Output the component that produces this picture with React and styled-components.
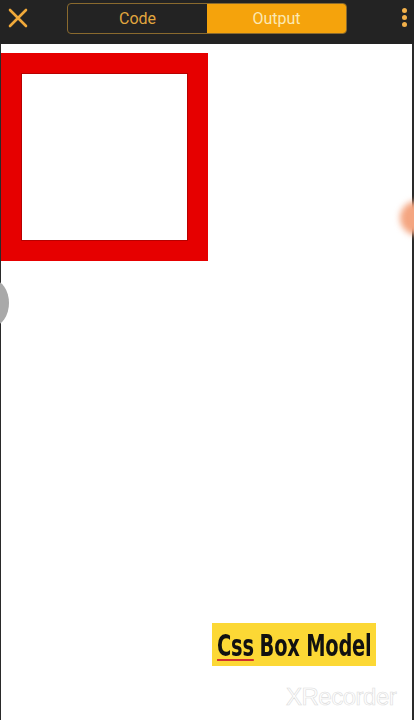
import React from "react";
import styled, { createGlobalStyle } from "styled-components";

const GlobalStyle = createGlobalStyle`
    html, body {
        margin: 0;
        padding: 0;
        background: #ffffff;
        font-family: Roboto, "Liberation Sans", sans-serif;
    }
`;

const Screen = styled.div`
    width: 414px;
    height: 720px;
    display: flex;
    flex-direction: column;
    overflow: hidden;
    position: relative;
    background: #ffffff;
`;

const TopBar = styled.div`
    height: 44px;
    background: #232323;
    display: flex;
    align-items: flex-start;
    padding: 3px 0 0 0;
    box-sizing: border-box;
`;

const CloseButton = styled.div`
    width: 34px;
    height: 30px;
    display: flex;
    align-items: center;
    justify-content: center;
    margin-left: 1px;
`;

const Tabs = styled.div`
    display: flex;
    width: 280px;
    height: 31px;
    margin-left: 32px;
    border: 1px solid #8a6a2e;
    border-radius: 4px;
    overflow: hidden;
    box-sizing: border-box;
`;

const Tab = styled.div`
    flex: 1;
    display: flex;
    align-items: center;
    justify-content: center;
    font-size: 16px;
    color: ${(p) => (p.active ? "#fbe9b4" : "#e1a63e")};
    background: ${(p) => (p.active ? "#f5a30c" : "transparent")};
`;

const Menu = styled.div`
    margin-left: auto;
    margin-right: 7px;
    margin-top: 5px;
    display: flex;
    flex-direction: column;
    gap: 2px;
`;

const Dot = styled.span`
    width: 5px;
    height: 5px;
    border-radius: 50%;
    background: #f2b04a;
`;

const Output = styled.div`
    flex: 1;
    border-left: 1px solid #2a2a2a;
    border-right: 2px solid #2a2a2a;
    padding-top: 9px;
    position: relative;
`;

const Box = styled.div`
    width: 167px;
    height: 168px;
    border: 20px solid #e60000;
    background: #ffffff;
    box-shadow: inset 0 0 0 1px #b80000;
`;

const SideHandle = styled.div`
    position: absolute;
    left: -24px;
    top: 236px;
    width: 32px;
    height: 46px;
    border-radius: 50%;
    background: #a9a9a9;
`;

const OrangeHandle = styled.div`
    position: absolute;
    right: -22px;
    top: 157px;
    width: 34px;
    height: 34px;
    border-radius: 50%;
    background: #f4a580;
    filter: blur(3px);
`;

const Caption = styled.div`
    position: absolute;
    left: 211px;
    top: 579px;
    width: 164px;
    height: 43px;
    background: #fcd835;
    display: flex;
    align-items: center;
    justify-content: center;
    overflow: hidden;
`;

const CaptionText = styled.span`
    display: inline-block;
    white-space: nowrap;
    font-family: "DejaVu Sans Condensed", "DejaVu Sans", sans-serif;
    font-stretch: condensed;
    font-weight: bold;
    font-size: 30px;
    line-height: 1;
    letter-spacing: -0.3px;
    color: #111111;
    transform: scaleX(0.72);
    margin-top: 2px;
`;

const Underlined = styled.span`
    text-decoration: underline;
    text-decoration-color: #d0312d;
    text-decoration-thickness: 2px;
    text-underline-offset: 3px;
    margin-right: 8px;
`;

const Watermark = styled.div`
    position: absolute;
    left: 285px;
    bottom: 9px;
    font-family: "Liberation Sans", sans-serif;
    font-size: 24px;
    color: rgba(255, 255, 255, 0.9);
    -webkit-text-stroke: 0.6px #dcdcdc;
    letter-spacing: -0.5px;
`;

export default function App() {
    return (
        <>
            <GlobalStyle />
            <Screen>
                <TopBar>
                    <CloseButton>
                        <svg width="20" height="20" viewBox="0 0 20 20">
                            <path d="M2 2 L18 18 M18 2 L2 18" stroke="#f0a93a" strokeWidth="2.6" strokeLinecap="round" />
                        </svg>
                    </CloseButton>
                    <Tabs>
                        <Tab>Code</Tab>
                        <Tab active>Output</Tab>
                    </Tabs>
                    <Menu>
                        <Dot />
                        <Dot />
                        <Dot />
                    </Menu>
                </TopBar>
                <Output>
                    <Box />
                    <SideHandle />
                    <OrangeHandle />
                    <Caption>
                        <CaptionText>
                            <Underlined>Css</Underlined>Box Model
                        </CaptionText>
                    </Caption>
                    <Watermark>XRecorder</Watermark>
                </Output>
            </Screen>
        </>
    );
}
